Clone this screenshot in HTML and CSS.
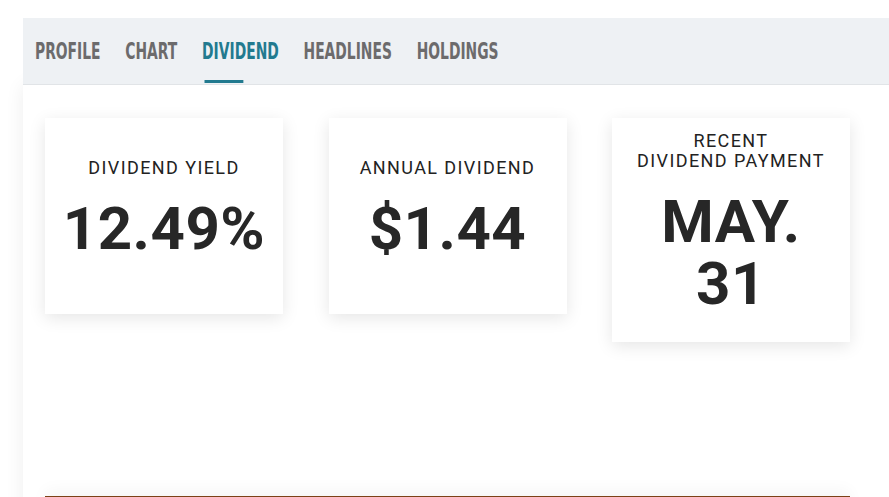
FILE: index.html
```html
<!DOCTYPE html>
<html lang="en">
<head>
    <meta charset="UTF-8">
    <meta name="viewport" content="width=device-width, initial-scale=1.0">
    <title>Dividend</title>
    <link rel="stylesheet" href="styles.css">
</head>
<body>
    <div class="page">
        <div class="tabs">
            <nav class="tab-row">
                <a href="#" class="tab">PROFILE</a>
                <a href="#" class="tab">CHART</a>
                <a href="#" class="tab active">DIVIDEND</a>
                <a href="#" class="tab">HEADLINES</a>
                <a href="#" class="tab">HOLDINGS</a>
            </nav>
        </div>

        <div class="panel">
            <div class="cards">
                <div class="card">
                    <div class="card-label">DIVIDEND YIELD</div>
                    <div class="card-value">12.49%</div>
                </div>
                <div class="card">
                    <div class="card-label">ANNUAL DIVIDEND</div>
                    <div class="card-value">$1.44</div>
                </div>
                <div class="card">
                    <div class="card-label">RECENT<br>DIVIDEND PAYMENT</div>
                    <div class="card-value">MAY.<br>31</div>
                </div>
            </div>

            <div class="history"></div>
        </div>
    </div>
</body>
</html>
```

FILE: styles.css
```css
body {
    margin: 0;
    font-family: Roboto, "Noto Sans", Arial, sans-serif;
    background-color: #fff;
    color: #262626;
    overflow: hidden;
}
.page {
    margin: 18px 0 0 23px;
}
.tabs {
    position: relative;
    z-index: 1;
    height: 66px;
    padding-left: 12px;
    background-color: #eef1f4;
    border-bottom: 1px solid #e1e4e7;
}
/* no condensed face installed, so squeeze the whole row */
.tab-row {
    display: flex;
    gap: 37px;
    height: 100%;
    transform: scaleX(0.67);
    transform-origin: left center;
}
.tab {
    position: relative;
    display: flex;
    align-items: center;
    font-family: "DejaVu Sans Condensed", "DejaVu Sans", sans-serif;
    font-weight: 700;
    font-size: 23px;
    color: #6c6b6c;
    text-decoration: none;
}
.tab.active {
    color: #227a8f;
}
.tab.active::after {
    content: "";
    position: absolute;
    left: 4px;
    bottom: 1px;
    width: 58px;
    height: 3px;
    background-color: #227a8f;
}
.panel {
    padding: 33px 0 0 22px;
    height: 500px;
    box-shadow: 0 0 18px rgba(0, 0, 0, 0.07);
}
.cards {
    display: grid;
    grid-template-columns: repeat(3, 238px);
    gap: 45.5px;
    align-items: start;
}
.card {
    box-sizing: border-box;
    min-height: 196px;
    padding: 13px 10px 27px;
    display: flex;
    flex-direction: column;
    justify-content: center;
    text-align: center;
    background-color: #fff;
    box-shadow: 0 4px 16px rgba(0, 0, 0, 0.1);
}
.card-label {
    font-size: 18px;
    line-height: 20px;
    letter-spacing: 1.4px;
    color: #222;
    margin-bottom: 20px;
}
.card-value {
    font-size: 60px;
    font-weight: 700;
    line-height: 62px;
    letter-spacing: 0.5px;
    color: #272727;
}
.history {
    width: 805px;
    height: 40px;
    margin-top: 154px;
    border-top: 2px solid #7b4116;
    box-shadow: 0 -6px 16px rgba(0, 0, 0, 0.04);
}
```
